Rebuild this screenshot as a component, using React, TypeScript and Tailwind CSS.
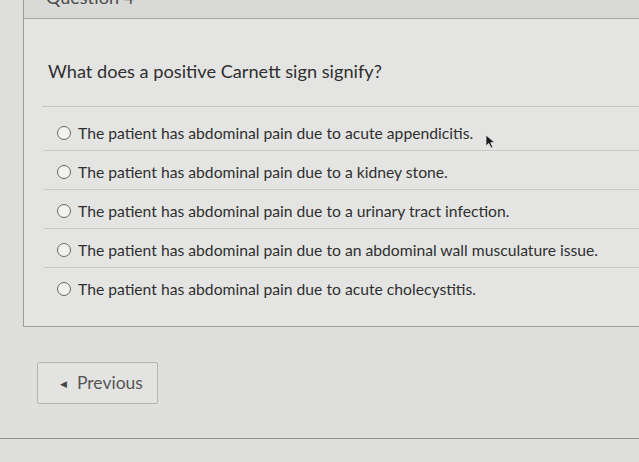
const OPTIONS = [
  'The patient has abdominal pain due to acute appendicitis.',
  'The patient has abdominal pain due to a kidney stone.',
  'The patient has abdominal pain due to a urinary tract infection.',
  'The patient has abdominal pain due to an abdominal wall musculature issue.',
  'The patient has abdominal pain due to acute cholecystitis.',
];

function Cursor() {
  return (
    <svg
      className="absolute left-[485px] top-[134px]"
      width="11"
      height="15"
      viewBox="0 0 11 15"
    >
      <path d="M1 1 L1 12 L3.8 9.4 L6 14 L7.8 13.2 L5.7 8.7 L9.5 8.5 Z" fill="#1a1a1a" stroke="#e6e6e6" strokeWidth="0.8" />
    </svg>
  );
}

export default function App() {
  return (
    <div className="relative w-[639px] h-[462px] overflow-hidden bg-[#dfe0de] font-['Lato','Liberation_Sans',sans-serif] text-[#2f2f2f]">
      {/* question card */}
      <div className="ml-[23px] border-l border-b border-[#9d9e9c] bg-[#e4e5e3]">
        <div className="h-[19px] overflow-hidden border-b border-[#a7a8a6] bg-[#d9dad8] pl-[22px]">
          <div className="-mt-[15px] text-[18px] leading-[24px] text-[#4a4a4a]">Question 4</div>
        </div>

        <div className="pt-[40px]">
          <p className="ml-[24px] text-[18.2px] leading-[24px]">What does a positive Carnett sign signify?</p>
          <div className="mt-[23px] ml-[18px] border-t border-[#c6c7c5]" />

          <ul className="pt-[5px] pb-[19px]">
            {OPTIONS.map((opt, i) => (
              <li
                key={i}
                className={`ml-[20px] flex h-[39px] items-center pt-[3px] border-[#c9cac8] ${i < OPTIONS.length - 1 ? 'border-b' : ''}`}
              >
                <span className="ml-[13px] h-[14px] w-[14px] shrink-0 rounded-full border-[1.5px] border-[#666765] bg-[#f2f2f1]" />
                <span className="ml-[7px] text-[15.7px] leading-[20px]">{opt}</span>
              </li>
            ))}
          </ul>
        </div>
      </div>

      {/* navigation */}
      <div className="h-[111px] pt-[35px] pl-[37px]">
        <button className="flex h-[42px] w-[121px] items-center rounded-[2px] border border-[#b4b5b3] bg-[#e3e4e2] pl-[22px] text-[17.5px] text-[#555]">
          <span className="mr-[10px] text-[9px] leading-none text-[#444]">◀</span>
          Previous
        </button>
      </div>
      <div className="border-t border-[#8f908e]" />

      <Cursor />
    </div>
  );
}
